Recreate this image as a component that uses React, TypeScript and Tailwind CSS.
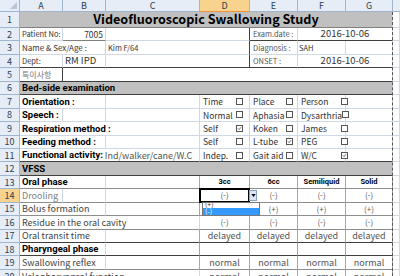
import React from 'react'

const SPAN: Record<number, string> = {
  1: '',
  2: 'col-span-2',
  3: 'col-span-3',
  6: 'col-span-6',
  7: 'col-span-7',
}

// border colours (right / bottom)
const G = 'border-r-[#d0d7e5]'
const GB = 'border-b-[#d0d7e5]'
const DK = 'border-r-[#404040]'
const DKB = 'border-b-[#404040]'
const MD = 'border-r-[#a6a6a6]'
const MDB = 'border-b-[#8c8c8c]'

// the sheet's bold labels are narrower than the CJK font's bold
const BOLD = "font-['Roboto',sans-serif] font-bold text-black"

type CellProps = {
  s?: number
  r?: string
  b?: string
  c?: string
  children?: React.ReactNode
}

function C({ s = 1, r = G, b = GB, c = '', children }: CellProps) {
  return (
    <div className={`relative flex items-center min-w-0 whitespace-nowrap border-r border-b ${SPAN[s]} ${r} ${b} ${c}`}>
      {children}
    </div>
  )
}

function RH({ n, on }: { n: number; on?: boolean }) {
  return (
    <div
      className={`flex items-center justify-center border-r border-b border-r-[#9eb6ce] border-b-[#9eb6ce] text-[9px] text-[#2c3e55] ${
        on ? 'bg-[#f8d38d]' : 'bg-[#e6edf7]'
      }`}
    >
      {n}
    </div>
  )
}

function Box({ on, mr }: { on?: boolean; mr: string }) {
  return (
    <span className={`ml-auto ${mr} w-[7px] h-[7px] shrink-0 border border-[#555] bg-white flex items-center justify-center`}>
      {on && (
        <svg viewBox="0 0 7 7" className="w-[7px] h-[7px]">
          <path d="M1.3 3.4 L2.9 5 L5.7 1.8" stroke="#222" strokeWidth="1" fill="none" />
        </svg>
      )}
    </span>
  )
}

const COLS = ['A', 'B', 'C', 'D', 'E', 'F', 'G']

const CHECK_ROWS = [
  { n: 7, label: 'Orientation :', s: 2, items: [['Time', 0], ['Place', 0], ['Person', 0]] },
  { n: 8, label: 'Speech :', s: 1, items: [['Normal', 0], ['Aphasia', 0], ['Dysarthria', 0]] },
  { n: 9, label: 'Respiration method :', s: 3, items: [['Self', 1], ['Koken', 0], ['James', 0]] },
  { n: 10, label: 'Feeding method :', s: 2, items: [['Self', 0], ['L-tube', 1], ['PEG', 0]] },
  { n: 11, label: 'Functional activity:', extra: ' Ind/walker/cane/W.C', s: 3, items: [['Indep.', 0], ['Gait aid', 0], ['W/C', 1]] },
] as const

const BOX_MR = ['mr-[6px]', 'mr-[4px]', 'mr-[-3px]']

const DATA_ROWS = [
  { n: 15, label: 'Bolus formation', s: 2, v: '(+)' },
  { n: 16, label: 'Residue in the oral cavity', s: 3, v: '(-)' },
  { n: 17, label: 'Oral transit time', s: 2, v: 'delayed' },
  { n: 18, label: 'Pharyngeal phase', s: 2, v: '', bold: true },
  { n: 19, label: 'Swallowing reflex', s: 2, v: 'normal' },
  { n: 20, label: 'Velopharyngeal function', s: 3, v: 'normal' },
]

export default function App() {
  return (
    <div className="relative w-[400px] h-[276px] overflow-hidden bg-white font-['Noto_Sans_CJK_KR','Noto_Sans',sans-serif] text-[#333] leading-none">
      <div className="grid grid-cols-[20px_43px_43px_94px_50px_48px_48px_47px_1fr] grid-rows-[12px_16px_repeat(19,13.45px)]">
        {/* column headers */}
        <div className="relative border-r border-b border-r-[#9eb6ce] border-b-[#9eb6ce] bg-[#e6edf7]">
          <svg viewBox="0 0 8 8" className="absolute right-[2px] bottom-[2px] w-[7px] h-[7px]">
            <path d="M8 0 L8 8 L0 8 Z" fill="#b7c6d9" />
          </svg>
        </div>
        {COLS.map((l) => (
          <div
            key={l}
            className={`flex items-center justify-center border-r border-b border-r-[#9eb6ce] text-[9px] text-[#2c3e55] ${
              l === 'D' ? 'bg-[#f8d38d] border-b-[#f29436]' : 'bg-[#e6edf7] border-b-[#9eb6ce]'
            }`}
          >
            {l}
          </div>
        ))}
        <div className="border-b border-b-[#9eb6ce] bg-[#e6edf7]" />

        {/* 1 */}
        <RH n={1} />
        <C s={7} b="border-b-[#808080]" c="bg-[#c0c0c0] justify-center text-[12.6px] font-bold text-black">
          Videofluoroscopic Swallowing Study
        </C>
        <C />

        {/* 2 */}
        <RH n={2} />
        <C c="pl-[2px] text-[7.5px]">Patient No:</C>
        <C b="border-b-[#808080]" c="justify-end pr-[2px] text-[8.5px]">7005</C>
        <C s={2} r={DK} />
        <C b={DKB} c="pl-[3px] text-[7.5px] text-[#555]">Exam.date :</C>
        <C s={2} b={DKB} c="justify-center text-[9.5px]">2016-10-06</C>
        <C />

        {/* 3 */}
        <RH n={3} />
        <C s={2} c="pl-[2px] text-[8px]">Name &amp; Sex/Age :</C>
        <C s={2} r={DK} c="pl-[2px] text-[7.5px]">Kim F/64</C>
        <C c="pl-[3px] text-[7.5px] text-[#555]">Diagnosis :</C>
        <C c="pl-[1px] text-[7.5px]">SAH</C>
        <C />
        <C />

        {/* 4 */}
        <RH n={4} />
        <C b={DKB} c="pl-[2px] text-[7.5px]">Dept:</C>
        <C b={DKB} c="pl-[2px] text-[9.5px]">RM IPD</C>
        <C s={2} r={DK} b={DKB} />
        <C b={DKB} c="pl-[3px] text-[7.5px] text-[#555]">ONSET :</C>
        <C s={2} b={DKB} c="justify-center text-[9.5px]">2016-10-06</C>
        <C />

        {/* 5 */}
        <RH n={5} />
        <C r={DK} b={DKB} c="pl-[2px] text-[8px] text-[#777]">특이사항</C>
        <C s={6} b={DKB} />
        <C />

        {/* 6 */}
        <RH n={6} />
        <C s={7} b={DKB} c={`bg-[#c0c0c0] pl-[2px] text-[9.5px] ${BOLD}`}>Bed-side examination</C>
        <C />

        {/* 7 - 11 */}
        {CHECK_ROWS.map((row) => (
          <React.Fragment key={row.n}>
            <RH n={row.n} />
            <C s={row.s} b={row.n === 11 ? DKB : GB} c="pl-[2px]">
              <span className={`text-[9.5px] ${BOLD}`}>{row.label}</span>
              {'extra' in row && <span className="text-[9px] text-[#555] whitespace-pre">{row.extra}</span>}
            </C>
            {Array.from({ length: 3 - row.s }).map((_, i) => (
              <C key={i} b={row.n === 11 ? DKB : GB} />
            ))}
            {row.items.map(([t, on], i) => (
              <C key={t} b={row.n === 11 ? DKB : GB} c="pl-[3px] text-[8.5px]">
                <span>{t}</span>
                <Box on={!!on} mr={BOX_MR[i]} />
              </C>
            ))}
            <C b={row.n === 11 ? DKB : GB} />
            <C />
          </React.Fragment>
        ))}

        {/* 12 */}
        <RH n={12} />
        <C s={7} b={DKB} c={`bg-[#c0c0c0] pl-[2px] text-[9.5px] ${BOLD}`}>VFSS</C>
        <C />

        {/* 13 */}
        <RH n={13} />
        <C s={2} b={MDB} c={`pl-[2px] text-[9.5px] ${BOLD}`}>Oral phase</C>
        <C r={MD} b={MDB} />
        {['3cc', '6cc', 'Semiliquid', 'Solid'].map((h) => (
          <C key={h} r={MD} b={MDB} c={`justify-center text-[7.5px] ${BOLD}`}>
            {h}
          </C>
        ))}
        <C />

        {/* 14 */}
        <RH n={14} on />
        <C b={MDB} c="pl-[2px] text-[9px] text-[#808080]">Drooling</C>
        <C b={MDB} />
        <C r={MD} b={MDB} />
        <C r={MD} b={MDB} c="justify-center text-[8px] text-[#555] z-20">
          (-)
          <div className="absolute inset-[-1px] border-2 border-black" />
          <div className="absolute left-full top-[1px] w-[8px] h-[11px] bg-[#dbe5f3] border border-[#8aa3c4] flex items-center justify-center">
            <svg viewBox="0 0 6 4" className="w-[5px] h-[3px]">
              <path d="M0 0 L6 0 L3 4 Z" fill="#111" />
            </svg>
          </div>
          <div className="absolute top-full left-[2px] w-[58px] h-[14px] bg-white border border-[#777] flex flex-col overflow-hidden text-[7px] text-[#333]">
            <div className="h-[6px] flex items-end pl-[2px] leading-none overflow-hidden">(+)</div>
            <div className="flex-1 bg-[#3399ff] text-white flex items-center pl-[2px]">(-)</div>
          </div>
        </C>
        {[0, 1, 2].map((i) => (
          <C key={i} r={MD} b={MDB} c="justify-center text-[8px] text-[#555]">
            (-)
          </C>
        ))}
        <C />

        {/* 15 - 20 */}
        {DATA_ROWS.map((row) => {
          const b = row.n === 17 || row.n === 18 ? DKB : MDB
          return (
            <React.Fragment key={row.n}>
              <RH n={row.n} />
              <C s={row.s} b={b} c={`pl-[2px] ${row.bold ? `text-[9.5px] ${BOLD}` : 'text-[9px] text-[#444]'}`}>
                {row.label}
              </C>
              {row.s === 2 && <C r={MD} b={b} />}
              {[0, 1, 2, 3].map((i) => (
                <C
                  key={i}
                  r={MD}
                  b={b}
                  c={`justify-center text-[#555] ${row.v.startsWith('(') ? 'text-[8px]' : 'text-[9px]'}`}
                >
                  {row.v}
                </C>
              ))}
              <C />
            </React.Fragment>
          )
        })}
      </div>

      {/* page break marker */}
      <div className="absolute left-[392px] top-[12px] bottom-0 border-l border-dashed border-[#555]" />
    </div>
  )
}
